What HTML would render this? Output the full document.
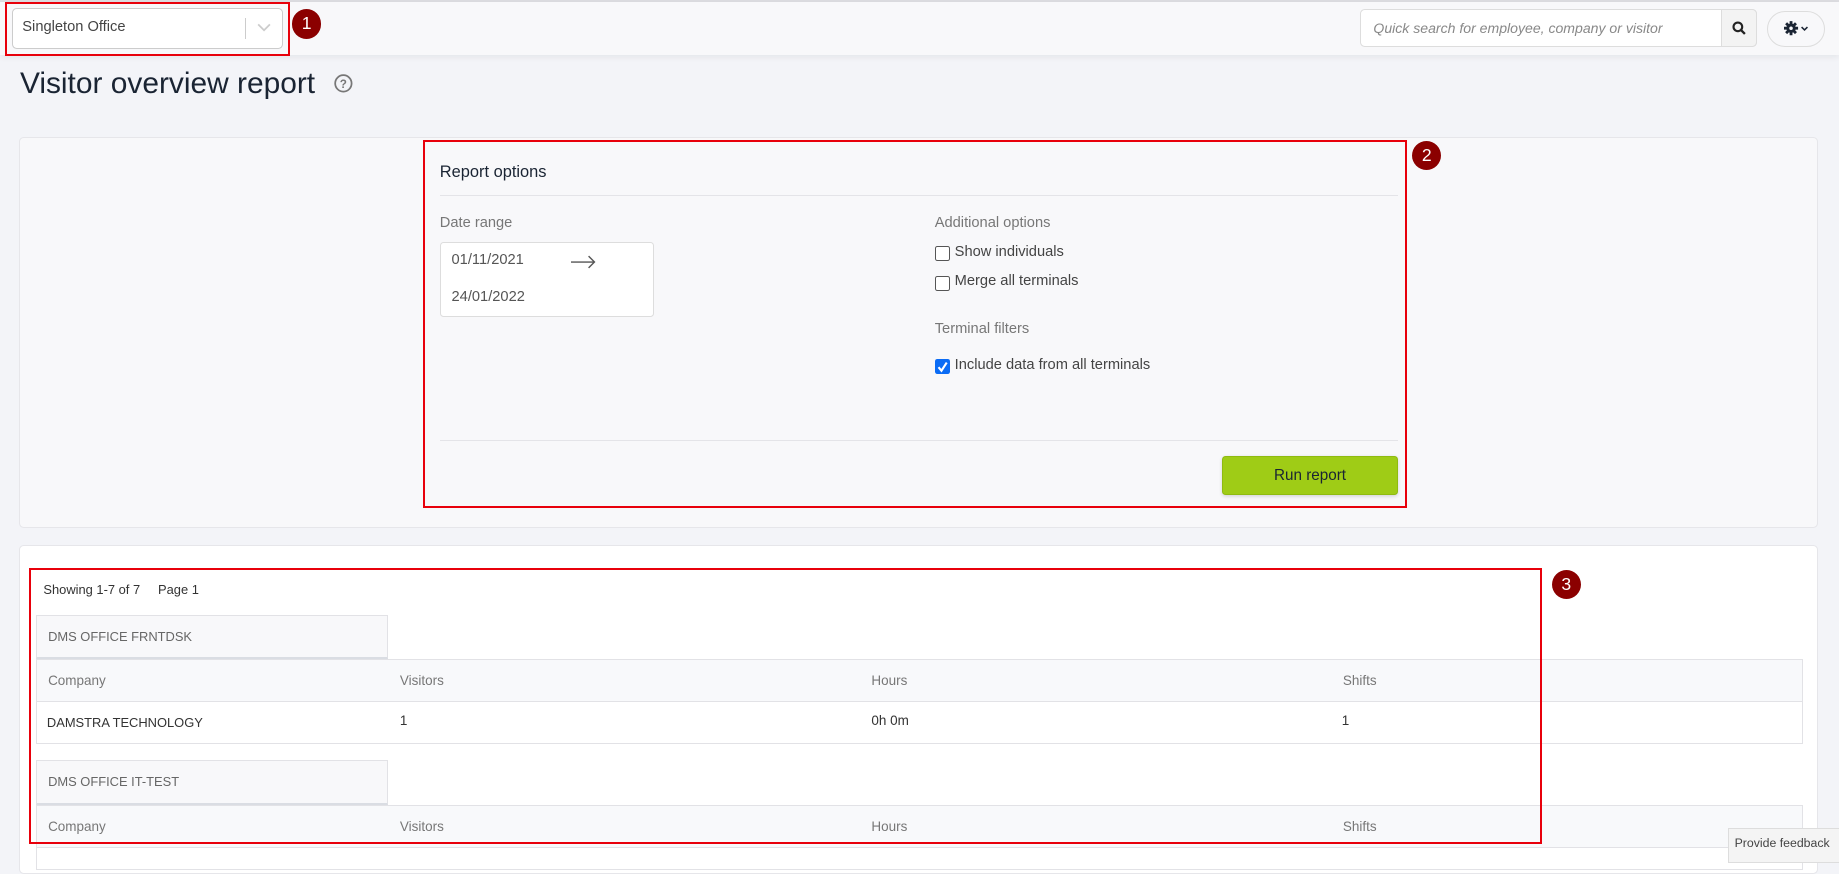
<!DOCTYPE html>
<html><head><meta charset="utf-8"><style>
html,body{margin:0;padding:0;}
body{width:1568px;height:733px;zoom:1.17283;background:#f3f4f8;font-family:"Liberation Sans",sans-serif;position:relative;overflow:hidden;color:#555;}
.a{position:absolute;}
.t{position:absolute;white-space:nowrap;}
.red{position:absolute;border:2px solid #e8000b;box-sizing:border-box;}
.num{position:absolute;width:25px;height:25px;border-radius:50%;background:#8b0000;color:#fff;font-size:15px;text-align:center;line-height:25px;}
.cb{position:absolute;width:11px;height:11px;border:1px solid #555;border-radius:2px;background:#fff;}
</style></head><body>
<div class="a" style="left:0;top:0;width:1568px;height:2px;background:#dcdce0"></div>
<div class="a" style="left:0;top:2px;width:1568px;height:45px;background:#f8f8fa;box-shadow:0 2px 5px rgba(0,0,0,.06)"></div>
<div class="a" style="left:10px;top:7px;width:230px;height:33px;background:#fff;border:1px solid #ccc;border-radius:4px;"></div>
<div class="t" style="left:19px;top:16px;font-size:12.5px;color:#444">Singleton Office</div>
<div class="a" style="left:209px;top:15px;width:1px;height:18px;background:#ccc"></div>
<svg class="a" style="left:219px;top:19px" width="12" height="9"><path d="M1 2l5 5 5-5" fill="none" stroke="#ccc" stroke-width="1.5"/></svg>
<div class="red" style="left:4px;top:2px;width:243px;height:46px"></div>
<div class="num" style="left:249px;top:8px">1</div>
<div class="a" style="left:1160px;top:8px;width:338px;height:32px;background:#fff;border:1px solid #ddd;border-radius:4px;box-sizing:border-box"></div>
<div class="t" style="left:1171px;top:17px;font-size:12px;font-style:italic;color:#888">Quick search for employee, company or visitor</div>
<div class="a" style="left:1467px;top:8px;width:31px;height:32px;background:#f3f3f3;border:1px solid #ddd;box-sizing:border-box;border-radius:0 4px 4px 0"></div>
<svg class="a" style="left:1477px;top:18px" width="12" height="12"><circle cx="5" cy="5" r="3.7" fill="none" stroke="#222" stroke-width="1.8"/><path d="M7.7 7.7L11 11" stroke="#222" stroke-width="2"/></svg>
<div class="a" style="left:1507px;top:9px;width:49px;height:31px;border:1px solid #ddd;border-radius:16px;box-sizing:border-box;background:#f8f8fa"></div>
<svg class="a" style="left:1521px;top:17px" width="24" height="14"><g transform="translate(6,7)" fill="#1a2433"><circle r="4"/><g stroke="#1a2433" stroke-width="2.4"><path d="M0-6V6M-6 0H6M-4.2-4.2L4.2 4.2M-4.2 4.2L4.2-4.2"/></g><circle r="1.5" fill="#f8f8fa"/></g><path d="M15 6l2.5 2.5L20 6" fill="none" stroke="#1a2433" stroke-width="1.3"/></svg>
<div class="t" style="left:17px;top:57px;font-size:25.5px;color:#1a2433">Visitor overview report</div>
<svg class="a" style="left:285px;top:63px" width="16" height="16"><circle cx="8" cy="8" r="7" fill="none" stroke="#777" stroke-width="1.5"/><text x="8" y="12" font-size="10" text-anchor="middle" fill="#777" font-family="Liberation Sans" font-weight="bold">?</text></svg>

<div class="a" style="left:16px;top:117px;width:1534px;height:333px;background:#f8f8fa;border:1px solid #e6e6ea;border-radius:4px;box-sizing:border-box"></div>
<div class="t" style="left:375px;top:139px;font-size:14px;color:#1a2433">Report options</div>
<div class="a" style="left:375px;top:166px;width:817px;height:1px;background:#e4e4e8"></div>
<div class="t" style="left:375px;top:183px;font-size:12.5px;color:#777">Date range</div>
<div class="a" style="left:375px;top:206px;width:183px;height:64px;background:#fff;border:1px solid #ddd;border-radius:3px;box-sizing:border-box"></div>
<div class="t" style="left:385px;top:215px;font-size:12.5px;color:#555">01/11/2021</div>
<svg class="a" style="left:487px;top:217px" width="22" height="12"><path d="M0 6H20M15 1l5 5-5 5" fill="none" stroke="#555" stroke-width="1.2"/></svg>
<div class="t" style="left:385px;top:246px;font-size:12.5px;color:#555">24/01/2022</div>
<div class="t" style="left:797px;top:183px;font-size:12.5px;color:#777">Additional options</div>
<div class="cb" style="left:797px;top:210px"></div>
<div class="t" style="left:814px;top:208px;font-size:12.5px;color:#444">Show individuals</div>
<div class="cb" style="left:797px;top:235px"></div>
<div class="t" style="left:814px;top:233px;font-size:12.5px;color:#444">Merge all terminals</div>
<div class="t" style="left:797px;top:274px;font-size:12.5px;color:#777">Terminal filters</div>
<div class="a" style="left:797px;top:306px;width:13px;height:13px;background:#0b6cf5;border-radius:2px"></div>
<svg class="a" style="left:797px;top:306px" width="13" height="13"><path d="M3 7l2.5 3L10 3" fill="none" stroke="#fff" stroke-width="1.8"/></svg>
<div class="t" style="left:814px;top:304px;font-size:12.5px;color:#444">Include data from all terminals</div>
<div class="a" style="left:375px;top:375px;width:817px;height:1px;background:#e4e4e8"></div>
<div class="a" style="left:1042px;top:389px;width:150px;height:33px;background:#9fcc16;border:1px solid #8fbb10;border-radius:3px;box-sizing:border-box;box-shadow:0 1px 3px rgba(0,0,0,.15)"></div>
<div class="t" style="left:1042px;top:398px;width:150px;text-align:center;font-size:13px;color:#1a2433">Run report</div>
<div class="red" style="left:361px;top:119px;width:839px;height:314px"></div>
<div class="num" style="left:1204px;top:120px">2</div>

<div class="a" style="left:16px;top:465px;width:1534px;height:280px;background:#fff;border:1px solid #e6e6ea;border-radius:4px;box-sizing:border-box"></div>
<div class="t" style="left:37px;top:496px;font-size:11px;color:#333">Showing 1-7 of 7&nbsp;&nbsp;&nbsp;&nbsp;&nbsp;Page 1</div>

<div class="a" style="left:31px;top:524px;width:300px;height:38px;background:#f8f8fa;border:1px solid #e2e2e6;border-bottom:2px solid #dadde3;box-sizing:border-box"></div>
<div class="t" style="left:41px;top:536px;font-size:11px;color:#666">DMS OFFICE FRNTDSK</div>
<div class="a" style="left:31px;top:562px;width:1506px;height:37px;background:#f8f9fb;border:1px solid #e2e2e6;box-sizing:border-box"></div>
<div class="a" style="left:31px;top:598px;width:1506px;height:36px;background:#fff;border:1px solid #e2e2e6;box-sizing:border-box"></div>
<div class="t" style="left:41px;top:574px;font-size:11.5px;color:#777">Company</div>
<div class="t" style="left:341px;top:574px;font-size:11.5px;color:#777">Visitors</div>
<div class="t" style="left:743px;top:574px;font-size:11.5px;color:#777">Hours</div>
<div class="t" style="left:1145px;top:574px;font-size:11.5px;color:#777">Shifts</div>
<div class="t" style="left:40px;top:610px;font-size:11px;color:#333">DAMSTRA TECHNOLOGY</div>
<div class="t" style="left:341px;top:608px;font-size:11.5px;color:#333">1</div>
<div class="t" style="left:743px;top:608px;font-size:11.5px;color:#333">0h 0m</div>
<div class="t" style="left:1144px;top:608px;font-size:11.5px;color:#333">1</div>

<div class="a" style="left:31px;top:648px;width:300px;height:38px;background:#f8f8fa;border:1px solid #e2e2e6;border-bottom:2px solid #dadde3;box-sizing:border-box"></div>
<div class="t" style="left:41px;top:660px;font-size:11px;color:#666">DMS OFFICE IT-TEST</div>
<div class="a" style="left:31px;top:686px;width:1506px;height:37px;background:#f8f9fb;border:1px solid #e2e2e6;box-sizing:border-box"></div>
<div class="a" style="left:31px;top:722px;width:1506px;height:20px;background:#fff;border:1px solid #e2e2e6;box-sizing:border-box"></div>
<div class="t" style="left:41px;top:698px;font-size:11.5px;color:#777">Company</div>
<div class="t" style="left:341px;top:698px;font-size:11.5px;color:#777">Visitors</div>
<div class="t" style="left:743px;top:698px;font-size:11.5px;color:#777">Hours</div>
<div class="t" style="left:1145px;top:698px;font-size:11.5px;color:#777">Shifts</div>
<div class="red" style="left:25px;top:484px;width:1290px;height:236px"></div>
<div class="num" style="left:1323px;top:486px">3</div>
<div class="a" style="left:1473px;top:706px;width:100px;height:30px;background:#f4f4f4;border:1px solid #ddd;box-sizing:border-box"></div>
<div class="t" style="left:1479px;top:713px;font-size:10.5px;color:#444">Provide feedback</div>
</body></html>
